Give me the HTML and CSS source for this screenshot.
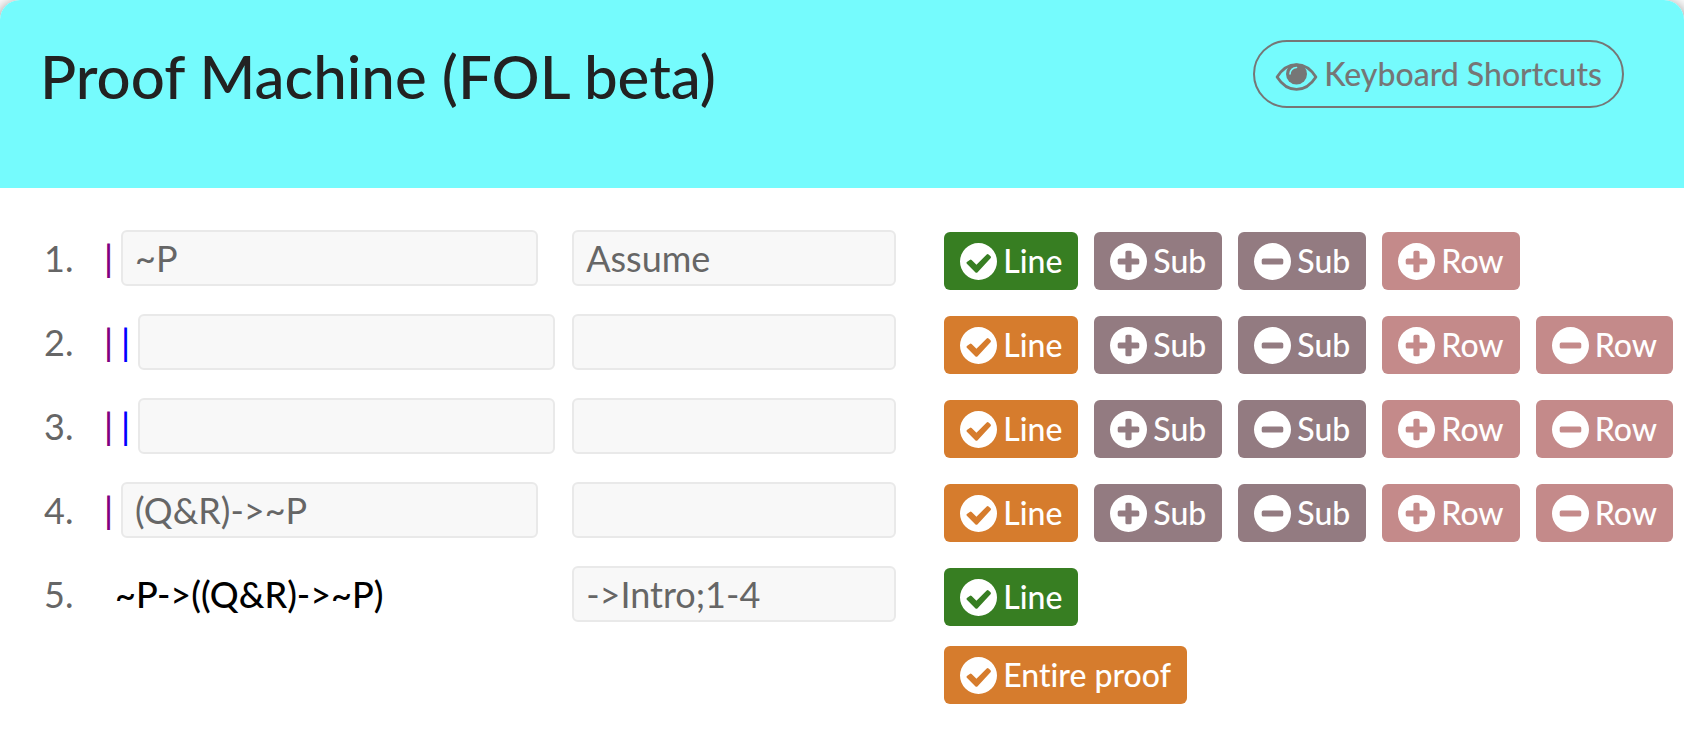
FILE: index.html
```
<!DOCTYPE html>
<html lang="en">
<head>
    <meta charset="UTF-8">
    <meta name="viewport" content="width=device-width, initial-scale=1.0">
    <link rel="stylesheet" href="styles.css">
    <title>Proof Machine</title>
</head>
<body>
    <!-- shared icons -->
    <svg class="sprite" aria-hidden="true">
        <symbol id="check" viewBox="0 0 36 36">
            <path fill="currentColor" fill-rule="evenodd" d="M18 0a18 18 0 1 1 0 36a18 18 0 1 1 0-36zM29.7 14.8q.9-.9 0-1.8l-1.9-1.9q-.9-.9-1.8 0L16 21.2l-4.7-4.7q-.9-.9-1.8 0l-2.8 1.9q-.9.9 0 1.8l8.4 8.4q.9.9 1.8 0z"/>
        </symbol>
        <symbol id="plus" viewBox="0 0 36 36">
            <path fill="currentColor" fill-rule="evenodd" d="M18 0a18 18 0 1 1 0 36a18 18 0 1 1 0-36zM16.5 7.5q-1.5 0-1.5 1.5v6h-6q-1.5 0-1.5 1.5v3q0 1.5 1.5 1.5h6v6q0 1.5 1.5 1.5h3q1.5 0 1.5-1.5v-6h6q1.5 0 1.5-1.5v-3q0-1.5-1.5-1.5h-6v-6q0-1.5-1.5-1.5z"/>
        </symbol>
        <symbol id="minus" viewBox="0 0 36 36">
            <path fill="currentColor" fill-rule="evenodd" d="M18 0a18 18 0 1 1 0 36a18 18 0 1 1 0-36zM9 15q-1.5 0-1.5 1.5v3q0 1.5 1.5 1.5h18q1.5 0 1.5-1.5v-3q0-1.5-1.5-1.5z"/>
        </symbol>
    </svg>

    <div class="machine">
        <header class="header">
            <h1>Proof Machine (FOL beta)</h1>
            <button type="button" class="shortcuts">
                <svg class="eye" viewBox="0 0 42 28" aria-hidden="true">
                    <path fill="none" stroke="currentColor" stroke-width="2.8" stroke-linejoin="round" d="M1.6 14C6 7 13 1.6 21 1.6s15 5.400 19.400 12.400c-4.400 7-11.400 12.400-19.400 12.400S6 21 1.6 14z"/>
                    <circle cx="21" cy="11" r="10.5" fill="currentColor"/>
                    <path fill="none" stroke="#75fbfd" stroke-width="1.6" stroke-linecap="round" d="M14.5 11c0-3.600 2.900-6.500 6.500-6.500"/>
                </svg>
                Keyboard Shortcuts
            </button>
        </header>

        <form class="proof">
            <div class="row">
                <span class="number">1.</span>
                <div class="formula">
                    <span class="bar purple">|</span>
                    <input type="text" aria-label="Formula 1" value="~P">
                </div>
                <input type="text" class="rule" aria-label="Rule 1" value="Assume">
                <div class="actions">
                    <button type="button" class="btn ok"><svg class="icon"><use href="#check"/></svg>Line</button>
                    <button type="button" class="btn sub"><svg class="icon"><use href="#plus"/></svg>Sub</button>
                    <button type="button" class="btn sub"><svg class="icon"><use href="#minus"/></svg>Sub</button>
                    <button type="button" class="btn line"><svg class="icon"><use href="#plus"/></svg>Row</button>
                </div>
            </div>

            <div class="row">
                <span class="number">2.</span>
                <div class="formula">
                    <span class="bar purple">|</span>
                    <span class="bar blue">|</span>
                    <input type="text" aria-label="Formula 2">
                </div>
                <input type="text" class="rule" aria-label="Rule 2">
                <div class="actions">
                    <button type="button" class="btn todo"><svg class="icon"><use href="#check"/></svg>Line</button>
                    <button type="button" class="btn sub"><svg class="icon"><use href="#plus"/></svg>Sub</button>
                    <button type="button" class="btn sub"><svg class="icon"><use href="#minus"/></svg>Sub</button>
                    <button type="button" class="btn line"><svg class="icon"><use href="#plus"/></svg>Row</button>
                    <button type="button" class="btn line"><svg class="icon"><use href="#minus"/></svg>Row</button>
                </div>
            </div>

            <div class="row">
                <span class="number">3.</span>
                <div class="formula">
                    <span class="bar purple">|</span>
                    <span class="bar blue">|</span>
                    <input type="text" aria-label="Formula 3">
                </div>
                <input type="text" class="rule" aria-label="Rule 3">
                <div class="actions">
                    <button type="button" class="btn todo"><svg class="icon"><use href="#check"/></svg>Line</button>
                    <button type="button" class="btn sub"><svg class="icon"><use href="#plus"/></svg>Sub</button>
                    <button type="button" class="btn sub"><svg class="icon"><use href="#minus"/></svg>Sub</button>
                    <button type="button" class="btn line"><svg class="icon"><use href="#plus"/></svg>Row</button>
                    <button type="button" class="btn line"><svg class="icon"><use href="#minus"/></svg>Row</button>
                </div>
            </div>

            <div class="row">
                <span class="number">4.</span>
                <div class="formula">
                    <span class="bar purple">|</span>
                    <input type="text" aria-label="Formula 4" value="(Q&amp;R)-&gt;~P">
                </div>
                <input type="text" class="rule" aria-label="Rule 4">
                <div class="actions">
                    <button type="button" class="btn todo"><svg class="icon"><use href="#check"/></svg>Line</button>
                    <button type="button" class="btn sub"><svg class="icon"><use href="#plus"/></svg>Sub</button>
                    <button type="button" class="btn sub"><svg class="icon"><use href="#minus"/></svg>Sub</button>
                    <button type="button" class="btn line"><svg class="icon"><use href="#plus"/></svg>Row</button>
                    <button type="button" class="btn line"><svg class="icon"><use href="#minus"/></svg>Row</button>
                </div>
            </div>

            <div class="row">
                <span class="number">5.</span>
                <div class="formula goal">~P-&gt;((Q&amp;R)-&gt;~P)</div>
                <input type="text" class="rule" aria-label="Rule 5" value="-&gt;Intro;1-4">
                <div class="actions stacked">
                    <button type="button" class="btn ok"><svg class="icon"><use href="#check"/></svg>Line</button>
                    <button type="button" class="btn todo"><svg class="icon"><use href="#check"/></svg>Entire proof</button>
                </div>
            </div>
        </form>
    </div>
</body>
</html>
```

FILE: styles.css
```
body {
    font-family: Lato, "Open Sans", sans-serif;
    font-variant-ligatures: none;
    background-color: #ffffff;
    margin: 0;
}

* {
    box-sizing: border-box;
}

.sprite {
    display: none;
}

.machine {
    min-height: 100vh;
    border-radius: 20px 20px 0 0;
    background-color: #ffffff;
    box-shadow: 0 4px 16px rgba(0, 0, 0, 0.6);
}

.header {
    display: flex;
    justify-content: space-between;
    align-items: flex-start;
    height: 188px;
    padding: 40px 60px 0 40px;
    border-radius: 20px 20px 0 0;
    background-color: #75fbfd;
}

h1 {
    margin: 0;
    color: #222222;
    font-size: 60px;
    font-weight: 500;
    line-height: 72px;
}

button {
    display: flex;
    align-items: center;
    gap: 6px;
    font-family: inherit;
    font-size: 32px;
    font-weight: 500;
    font-variant-ligatures: none;
    white-space: nowrap;
    cursor: pointer;
}

.shortcuts {
    height: 68px;
    padding: 0 20px 2px;
    border: 2px solid #767676;
    border-radius: 34px;
    background-color: transparent;
    color: #767676;
}

.eye {
    flex: none;
    width: 43px;
    height: 28px;
    margin-top: 8px;
}

.proof {
    display: grid;
    grid-template-columns: 60px 13fr 9fr auto;
    row-gap: 24px;
    padding: 42px 11px 42px 44px;
}

.row {
    display: grid;
    grid-template-columns: subgrid;
    grid-column: 1 / -1;
    align-items: start;
    color: #666666;
    font-size: 36px;
    line-height: 56px;
}

.formula {
    display: flex;
}

.bar {
    width: 17px;
    font-weight: 500;
}

.purple {
    color: purple;
}

.blue {
    color: blue;
}

.goal {
    padding-left: 11px;
    color: #000000;
    font-weight: 500;
}

input {
    width: 100%;
    height: 56px;
    padding: 0 12px;
    border: 2px solid #e9e9e9;
    border-radius: 6px;
    background-color: #f8f8f8;
    color: #666666;
    font-family: inherit;
    font-size: 36px;
}

.formula input {
    flex: none;
    width: calc(100% - 51px);
}

.actions {
    display: flex;
    gap: 16px;
    padding: 2px 0 0 48px;
}

.stacked {
    flex-direction: column;
    align-items: flex-start;
    gap: 20px;
}

.btn {
    height: 58px;
    padding: 0 16px 2px;
    border: none;
    border-radius: 6px;
    color: #ffffff;
}

.icon {
    width: 37px;
    height: 37px;
    margin-top: 2px;
}

.ok {
    background-color: #377e22;
}

.todo {
    background-color: #d67c2d;
}

.sub {
    background-color: #937b81;
}

.line {
    background-color: #c48a8a;
}
```
